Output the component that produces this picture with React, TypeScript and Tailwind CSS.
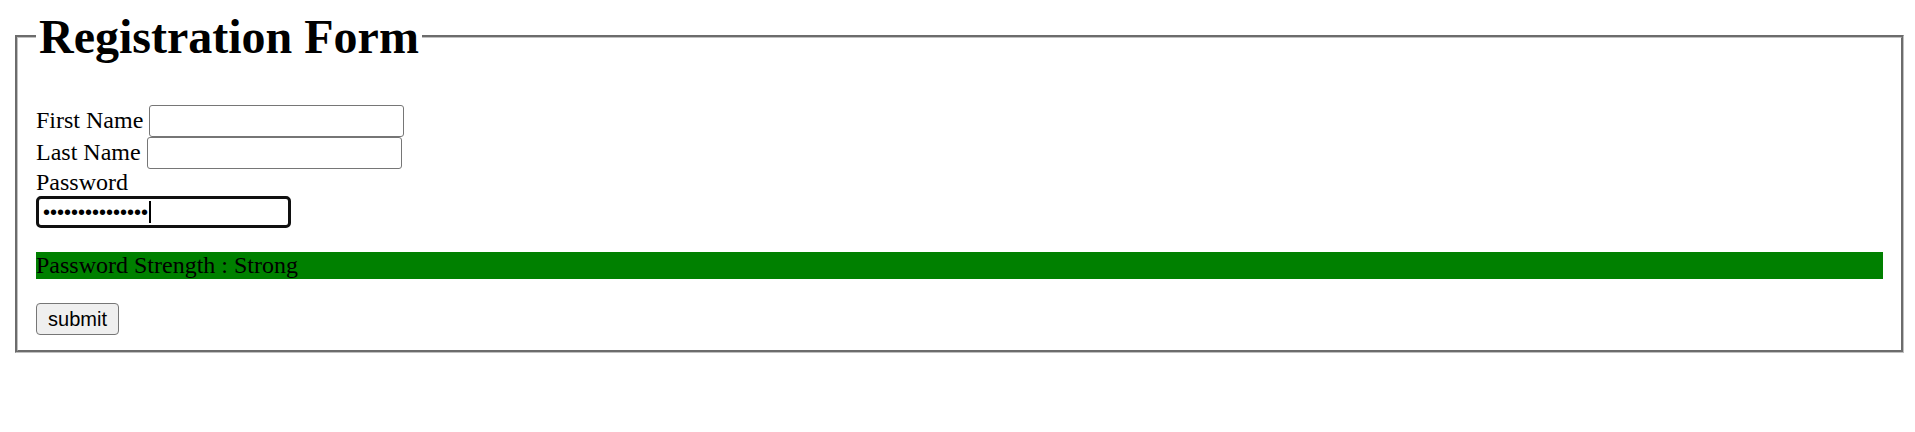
import React from "react";

export default function App() {
  return (
    <div className="min-h-[432px] bg-white pt-[9px] pl-[15px] font-['Liberation_Serif',serif] text-[24px] leading-[normal] text-black">
      <fieldset className="block w-[1889px] border-[3px] [border-style:groove] border-[#c0c0c0] px-[18px] pt-[41px] pb-[15px]">
        <legend className="px-[3px] text-[48px] font-bold leading-[normal]">Registration Form</legend>
        <div>
          <label>First Name</label>{" "}
          <input
            type="text"
            className="w-[255px] h-[32px] border-[1.5px] border-[#767676] rounded-[3px] bg-white px-[3px] align-baseline font-['Liberation_Sans',sans-serif] text-[20px] outline-none"
          />
        </div>
        <div>
          <label>Last Name</label>{" "}
          <input
            type="text"
            className="w-[255px] h-[32px] border-[1.5px] border-[#767676] rounded-[3px] bg-white px-[3px] align-baseline font-['Liberation_Sans',sans-serif] text-[20px] outline-none"
          />
        </div>
        <div>
          <label>Password</label>
        </div>
        <div className="flex">
          <div className="flex h-[32px] w-[255px] items-center rounded-[5px] border-[3px] border-[#101010] bg-white pl-[4px] font-['Liberation_Sans',sans-serif] text-[20px] leading-none">
            <span>•••••••••••••••</span>
            <span className="ml-[1px] inline-block h-[22px] w-[2px] bg-black"></span>
          </div>
        </div>
        <div className="mt-[24px] bg-[#008000] text-black">Password Strength : Strong</div>
        <div className="mt-[24px]">
          <button
            type="button"
            className="flex h-[32px] w-[83px] items-center justify-center rounded-[4px] border-[1.5px] border-[#767676] bg-[#efefef] font-['Liberation_Sans',sans-serif] text-[20px] leading-none text-black"
          >
            submit
          </button>
        </div>
      </fieldset>
    </div>
  );
}
